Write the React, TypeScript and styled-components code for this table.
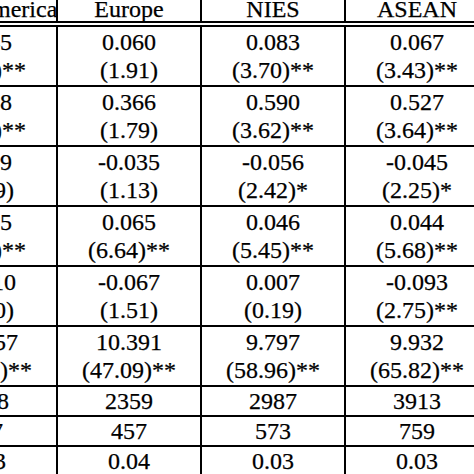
import React from "react";
import styled, { createGlobalStyle } from "styled-components";

const Global = createGlobalStyle`
  html, body { margin: 0; padding: 0; background: #fff; }
  body { overflow: hidden; }
`;

const Viewport = styled.div`
  width: 474px;
  height: 474px;
  overflow: hidden;
  background: #fff;
`;

const Table = styled.table`
  border-collapse: collapse;
  table-layout: fixed;
  width: 578px;
  margin-left: -88px;
  margin-top: -3px;
  font-family: "Liberation Serif", "Times New Roman", serif;
  font-size: 24px;
  color: #000;
  -webkit-text-stroke: 0.25px #000;
`;

const Col = styled.col`
  width: 144px;
`;

const HeadCell = styled.th`
  font-weight: normal;
  padding: 0;
  line-height: 24px;
  height: 24px;
  vertical-align: bottom;
  text-align: center;
  white-space: nowrap;
  border-left: 2px solid #000;
  border-right: 2px solid #000;
  border-bottom: 6px double #000;
`;

const Cell = styled.td<{ $lines: number }>`
  padding: 0;
  height: ${(p) => (p.$lines > 1 ? 58 : 28)}px;
  line-height: 28px;
  text-align: center;
  vertical-align: middle;
  white-space: nowrap;
  border: 2px solid #000;
`;

const Line = styled.div`
  display: block;
`;

const headers = ["North America", "Europe", "NIES", "ASEAN"];

const rows: string[][][] = [
  [["0.045", "(2.93)**"], ["0.060", "(1.91)"], ["0.083", "(3.70)**"], ["0.067", "(3.43)**"]],
  [["0.478", "(3.44)**"], ["0.366", "(1.79)"], ["0.590", "(3.62)**"], ["0.527", "(3.64)**"]],
  [["0.019", "(0.69)"], ["-0.035", "(1.13)"], ["-0.056", "(2.42)*"], ["-0.045", "(2.25)*"]],
  [["0.055", "(7.31)**"], ["0.065", "(6.64)**"], ["0.046", "(5.45)**"], ["0.044", "(5.68)**"]],
  [["-0.010", "(0.40)"], ["-0.067", "(1.51)"], ["0.007", "(0.19)"], ["-0.093", "(2.75)**"]],
  [["10.457", "(41.56)**"], ["10.391", "(47.09)**"], ["9.797", "(58.96)**"], ["9.932", "(65.82)**"]],
  [["1678"], ["2359"], ["2987"], ["3913"]],
  [["427"], ["457"], ["573"], ["759"]],
  [["0.03"], ["0.04"], ["0.03"], ["0.03"]],
];

export default function App() {
  return (
    <Viewport>
      <Global />
      <Table>
        <colgroup>
          {headers.map((h) => (
            <Col key={h} />
          ))}
        </colgroup>
        <thead>
          <tr>
            {headers.map((h) => (
              <HeadCell key={h}>{h}</HeadCell>
            ))}
          </tr>
        </thead>
        <tbody>
          {rows.map((row, i) => (
            <tr key={i}>
              {row.map((cell, j) => (
                <Cell key={j} $lines={cell.length}>
                  {cell.map((t, k) => (
                    <Line key={k}>{t}</Line>
                  ))}
                </Cell>
              ))}
            </tr>
          ))}
        </tbody>
      </Table>
    </Viewport>
  );
}
